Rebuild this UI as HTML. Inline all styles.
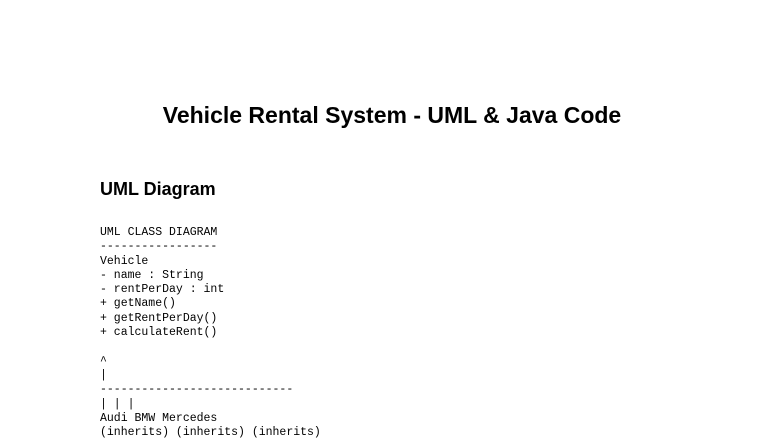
<!DOCTYPE html>
<html><head><style>
body{margin:0;width:784px;height:441px;overflow:hidden;background:#fff;font-family:"Liberation Sans",sans-serif;color:#000}
h1{position:absolute;top:102px;left:0;width:784px;text-align:center;margin:0;font-size:23px;font-weight:bold}
h2{position:absolute;top:179px;left:100px;margin:0;font-size:18px;font-weight:bold}
pre{position:absolute;top:226px;left:100px;margin:0;font-family:"Liberation Mono",monospace;font-size:11.5px;line-height:14.3px}
</style></head><body>
<h1>Vehicle Rental System - UML &amp; Java Code</h1>
<h2>UML Diagram</h2>
<pre>UML CLASS DIAGRAM
-----------------
Vehicle
- name : String
- rentPerDay : int
+ getName()
+ getRentPerDay()
+ calculateRent()

^
|
----------------------------
| | |
Audi BMW Mercedes
(inherits) (inherits) (inherits)</pre>
</body></html>
